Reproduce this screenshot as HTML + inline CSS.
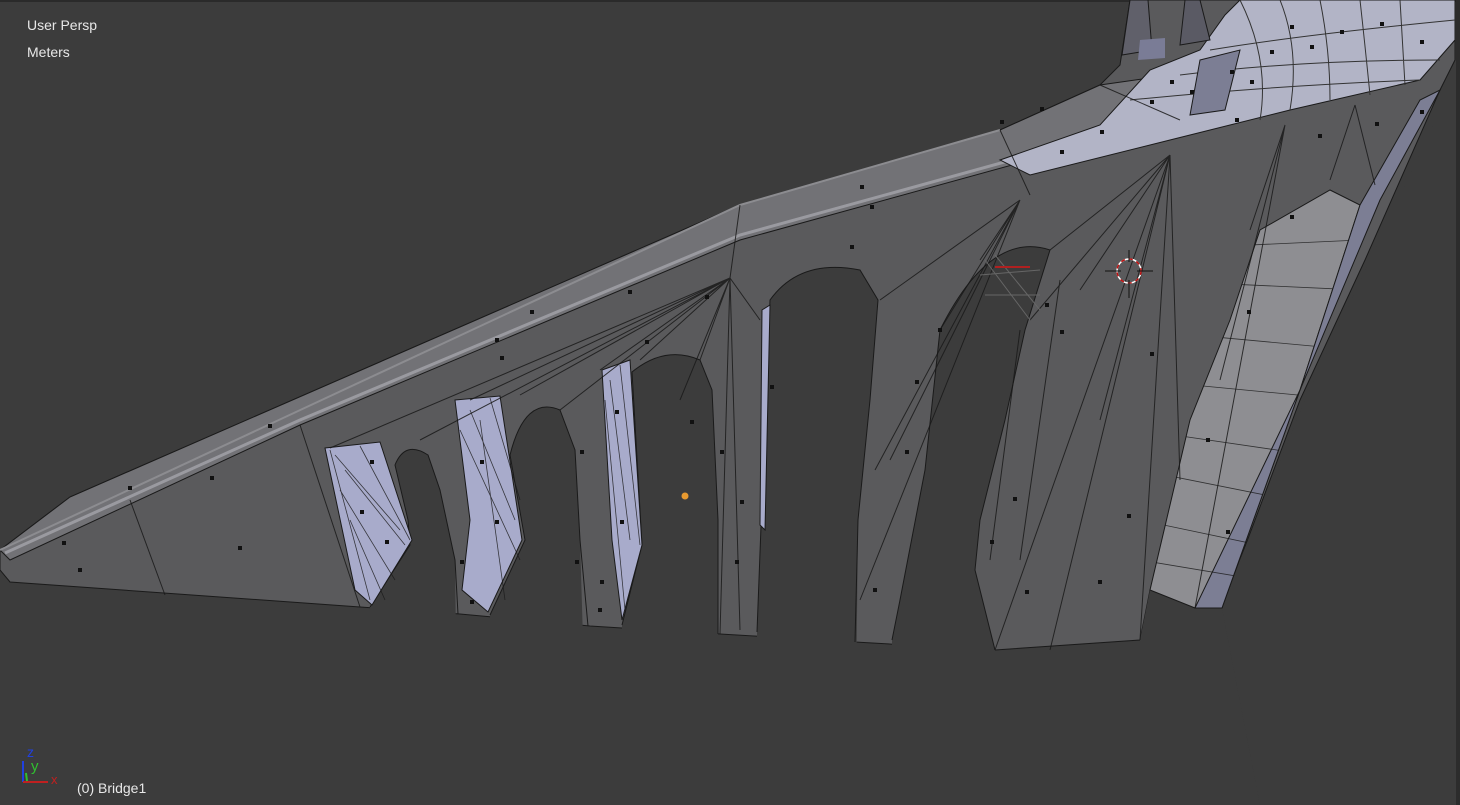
<!DOCTYPE html>
<html><head><meta charset="utf-8"><style>
html,body{margin:0;padding:0;background:#3c3c3c;width:1460px;height:805px;overflow:hidden}
.t{position:absolute;color:#e8e8e8;font:14px "Liberation Sans","DejaVu Sans",sans-serif}
</style></head><body>
<svg width="1460" height="805" style="position:absolute;left:0;top:0">
<defs><clipPath id="rp"><path d="M1150,590 L1195,608 L1222,608 L1300,390 L1360,205 L1330,190 L1260,230 L1230,320 L1190,420 Z"/></clipPath></defs>
<rect width="1460" height="805" fill="#3c3c3c"/>
<rect x="0" y="0" width="1460" height="2" fill="#2a2a2a"/>
<rect x="1456" y="0" width="4" height="805" fill="#2c2c2c"/>
<path d="M0,550 L70,497 L740,205 L1000,130 L1100,85 L1120,65 L1130,0 L1455,0 L1455,60 L1440,90 L1365,260 L1300,400 L1240,560 L1222,608 L1195,608 L1150,590 L1140,640 L995,650 L855,642 L720,634 L590,626 L460,614 L360,607 L10,582 L0,570 Z" fill="#5a5a5c" stroke="#1a1a1a" stroke-width="1"/>
<path d="M0,550 L70,497 L740,205 L1000,130 L1100,85 L1170,75 L1170,120 L1030,160 L740,240 L300,425 L10,560 Z" fill="#727276" stroke="#1a1a1a" stroke-width="1"/>
<path d="M5,553 L300,420 L740,235 L1030,155 L1170,115" fill="none" stroke="#9a9aa0" stroke-width="3"/>
<path d="M0,550 L740,205 L1000,130" fill="none" stroke="#8c8c90" stroke-width="2"/>
<path d="M1000,160 L1100,125 L1150,70 L1200,50 L1225,15 L1240,0 L1455,0 L1455,40 L1420,80 L1290,110 L1170,140 L1030,175 Z" fill="#b2b4c6" stroke="#1a1a1a"/>
<g stroke="#333" stroke-width="1" fill="none">
<path d="M1240,0 Q1270,60 1260,120 M1280,0 Q1300,50 1290,110 M1320,0 Q1330,50 1330,100 M1360,0 Q1365,45 1370,95 M1400,0 L1405,85 M1210,50 Q1300,35 1455,20 M1180,75 Q1300,60 1440,60 M1130,100 Q1280,85 1420,80"/>
</g>
<path d="M1200,60 L1240,50 L1225,110 L1190,115 Z" fill="#7c7e94" stroke="#1a1a1a"/>
<path d="M1130,0 L1148,0 L1152,50 L1122,55 Z" fill="#60606a" stroke="#1a1a1a"/>
<path d="M1140,40 L1165,38 L1165,58 L1138,60Z" fill="#7a7c96"/>
<path d="M1185,0 L1200,0 L1210,40 L1180,45Z" fill="#5a5a64" stroke="#1a1a1a"/>
<g fill="#3c3c3c">
<path d="M365,805 L370,607 L410,545 L408,520 L395,465 Q405,440 428,455 L440,490 L455,560 L458,805 Z"/>
<path d="M490,805 L490,615 L525,540 L510,455 Q525,395 560,410 L575,450 L580,540 L588,805 Z"/>
<path d="M622,805 L622,625 L642,545 L632,372 Q665,345 700,360 L712,390 L718,520 L718,805 Z"/>
<path d="M757,805 L757,632 L762,500 L770,300 Q800,258 860,270 L878,300 L870,400 L858,520 L855,805 Z"/>
<path d="M892,805 L892,640 L900,600 L925,470 L940,330 Q990,230 1050,250 L1025,330 L1005,420 L980,520 L975,570 L995,650 L995,805 Z"/>
<path d="M1140,805 L1140,640 L1150,590 L1195,608 L1222,608 L1260,805 Z"/>
<path d="M1455,100 L1440,110 L1370,260 L1305,400 L1240,560 L1222,608 L1260,805 L1455,805 Z"/>
</g>
<g fill="none" stroke="#1a1a1a">
<path d="M370,607 L410,545 L408,520 L395,465 Q405,440 428,455 L440,490 L455,560 L458,614"/>
<path d="M490,615 L525,540 L510,455 Q525,395 560,410 L575,450 L580,540 L588,626"/>
<path d="M622,625 L642,545 L632,372 Q665,345 700,360 L712,390 L718,520 L718,634"/>
<path d="M757,632 L762,500 L770,300 Q800,258 860,270 L878,300 L870,400 L858,520 L855,642"/>
<path d="M892,640 L900,600 L925,470 L940,330 Q990,230 1050,250 L1025,330 L1005,420 L980,520 L975,570 L995,650"/>
</g>
<g fill="#a8abcb" stroke="#1a1a1a">
<path d="M325,448 L380,442 L412,540 L372,605 L355,590 Z"/>
<path d="M455,400 L500,396 L522,540 L488,612 L462,590 L470,520 Z"/>
<path d="M602,370 L630,360 L642,545 L622,620 L612,540 Z"/>
<path d="M762,310 L770,305 L765,530 L760,525 Z"/>
<path d="M1150,590 L1195,608 L1222,608 L1300,390 L1360,205 L1330,190 L1260,230 L1230,320 L1190,420 Z" fill="#8e8e92"/>
<path d="M1195,608 L1222,608 L1300,390 L1380,200 L1440,90 L1420,100 L1360,205 L1300,390 Z" fill="#7c7e94"/>
</g>
<g stroke="#1a1a1a" stroke-width=".8" opacity=".8">
<path d="M335,455 L400,530 M345,470 L405,545 M340,490 L395,580 M350,520 L385,600 M330,450 L370,600 M360,446 L410,540 M470,410 L515,520 M480,420 L505,600 M460,430 L520,560 M490,398 L520,500 M610,380 L630,540 M620,365 L640,545 M605,400 L625,610"/>
</g>
<g stroke="#1a1a1a" stroke-width=".8" opacity=".8" clip-path="url(#rp)">
<path d="M1140,470 L1340,510 M1140,430 L1345,460 M1140,380 L1350,400 M1140,330 L1355,350 M1140,280 L1360,290 M1140,250 L1360,240 M1140,520 L1330,560 M1140,560 L1260,580"/>
</g>
<g stroke="#1a1a1a" stroke-width="1" fill="none" opacity=".85">
<path d="M730,278 L640,360 M730,278 L600,370 M730,278 L520,395 M730,278 L420,440 M730,278 L330,448 M730,278 L720,634 M730,278 L740,630 M730,278 L760,320 M730,278 L700,360 M730,278 L680,400 M730,278 L560,410 M730,278 L470,400"/>
<path d="M1020,200 L880,300 M1020,200 L940,330 M1020,200 L890,460 M1020,200 L875,470 M1020,200 L980,260 M1020,200 L1000,250 M1020,200 L860,600"/>
<path d="M1170,155 L1050,250 M1170,155 L1080,290 M1170,155 L1030,320 M1170,155 L995,650 M1170,155 L1050,650 M1170,155 L1140,640 M1170,155 L1180,480 M1170,155 L1100,420"/>
<path d="M1285,125 L1250,230 M1285,125 L1220,380 M1285,125 L1195,608 M1355,105 L1330,180 M1355,105 L1375,185"/>
<path d="M300,425 L360,607 M130,500 L165,595 M740,205 L730,278 M1000,130 L1030,195 M1100,85 L1180,120"/>
<path d="M990,560 L1020,330 M1020,560 L1060,280"/>
</g>
<g stroke="#666" stroke-width="1"><path d="M985,260 L1030,320 M995,255 L1040,310 M980,275 L1040,270 M985,295 L1040,295"/></g>
<line x1="995" y1="267" x2="1030" y2="267" stroke="#b02020" stroke-width="2"/>
<g fill="#111">
<rect x="238" y="546" width="4" height="4"/><rect x="78" y="568" width="4" height="4"/><rect x="62" y="541" width="4" height="4"/><rect x="128" y="486" width="4" height="4"/><rect x="210" y="476" width="4" height="4"/><rect x="268" y="424" width="4" height="4"/><rect x="495" y="338" width="4" height="4"/><rect x="530" y="310" width="4" height="4"/><rect x="500" y="356" width="4" height="4"/><rect x="628" y="290" width="4" height="4"/><rect x="645" y="340" width="4" height="4"/><rect x="615" y="410" width="4" height="4"/><rect x="580" y="450" width="4" height="4"/><rect x="600" y="580" width="4" height="4"/><rect x="598" y="608" width="4" height="4"/><rect x="620" y="520" width="4" height="4"/><rect x="690" y="420" width="4" height="4"/><rect x="740" y="500" width="4" height="4"/><rect x="735" y="560" width="4" height="4"/><rect x="860" y="185" width="4" height="4"/><rect x="870" y="205" width="4" height="4"/><rect x="850" y="245" width="4" height="4"/><rect x="915" y="380" width="4" height="4"/><rect x="905" y="450" width="4" height="4"/><rect x="873" y="588" width="4" height="4"/><rect x="1000" y="120" width="4" height="4"/><rect x="1040" y="107" width="4" height="4"/><rect x="1100" y="130" width="4" height="4"/><rect x="1150" y="352" width="4" height="4"/><rect x="1127" y="514" width="4" height="4"/><rect x="1098" y="580" width="4" height="4"/><rect x="1013" y="497" width="4" height="4"/><rect x="1025" y="590" width="4" height="4"/><rect x="990" y="540" width="4" height="4"/><rect x="1206" y="438" width="4" height="4"/><rect x="1226" y="530" width="4" height="4"/><rect x="1247" y="310" width="4" height="4"/><rect x="1290" y="215" width="4" height="4"/><rect x="1318" y="134" width="4" height="4"/><rect x="1375" y="122" width="4" height="4"/><rect x="1420" y="110" width="4" height="4"/><rect x="1190" y="90" width="4" height="4"/><rect x="1230" y="70" width="4" height="4"/><rect x="1270" y="50" width="4" height="4"/><rect x="1310" y="45" width="4" height="4"/><rect x="1340" y="30" width="4" height="4"/><rect x="1290" y="25" width="4" height="4"/><rect x="1380" y="22" width="4" height="4"/><rect x="1420" y="40" width="4" height="4"/><rect x="1250" y="80" width="4" height="4"/><rect x="1235" y="118" width="4" height="4"/><rect x="1045" y="303" width="4" height="4"/><rect x="1060" y="330" width="4" height="4"/><rect x="938" y="328" width="4" height="4"/><rect x="370" y="460" width="4" height="4"/><rect x="360" y="510" width="4" height="4"/><rect x="385" y="540" width="4" height="4"/><rect x="480" y="460" width="4" height="4"/><rect x="495" y="520" width="4" height="4"/><rect x="470" y="600" width="4" height="4"/><rect x="460" y="560" width="4" height="4"/><rect x="575" y="560" width="4" height="4"/><rect x="720" y="450" width="4" height="4"/><rect x="770" y="385" width="4" height="4"/><rect x="705" y="295" width="4" height="4"/><rect x="1150" y="100" width="4" height="4"/><rect x="1170" y="80" width="4" height="4"/><rect x="1060" y="150" width="4" height="4"/></g>
<circle cx="1129" cy="271" r="12" fill="none" stroke="#fff" stroke-width="1.5"/>
<circle cx="1129" cy="271" r="12" fill="none" stroke="#c01010" stroke-width="1.5" stroke-dasharray="4 4"/>
<path d="M1105,271 L1121,271 M1137,271 L1153,271 M1129,250 L1129,262 M1129,280 L1129,298" stroke="#111" stroke-width="1"/>
<circle cx="685" cy="496" r="3.5" fill="#e89a30"/>
<line x1="23" y1="761" x2="23" y2="782" stroke="#2040e0" stroke-width="2"/>
<line x1="23" y1="782" x2="48" y2="782" stroke="#c02020" stroke-width="2"/>
<line x1="26" y1="773" x2="27" y2="781" stroke="#30c030" stroke-width="2"/>
<text x="27" y="757" fill="#2040e0" font-family="Liberation Sans" font-size="14">z</text>
<text x="31" y="771" fill="#30c030" font-family="Liberation Sans" font-size="15">y</text>
<text x="51" y="784" fill="#c02020" font-family="Liberation Sans" font-size="13">x</text>
</svg>
<div class="t" style="left:27px;top:17px">User Persp</div>
<div class="t" style="left:27px;top:44px">Meters</div>
<div class="t" style="left:77px;top:780px">(0) Bridge1</div>
</body></html>
